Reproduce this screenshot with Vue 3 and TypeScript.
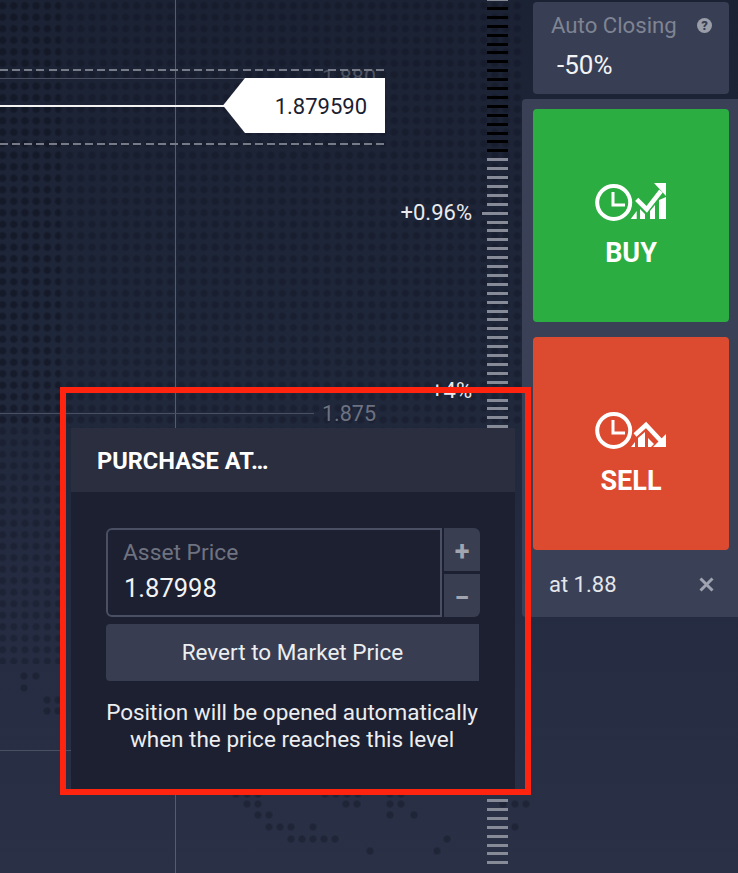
<script setup lang="ts">
// ruler ticks down the right edge of the chart
const ticks = Array.from({ length: 98 }, (_, i) => ({
  top: i * 8.9 - 2,
  dark: i > 0 && i < 18,
  major: i >= 24 && i % 20 === 4,
}))

// sparse dots of the world map around the dialog
const mapDots: [number, number][] = [
  [236, 794], [247, 794], [258, 794], [325, 794], [336, 794], [347, 794], [358, 794], [390, 794], [401, 794],
  [247, 804], [258, 804], [346, 804], [357, 804], [390, 804], [401, 804], [503, 804], [515, 804], [526, 804],
  [258, 815], [269, 815], [390, 815], [414, 815],
  [269, 827], [280, 827], [291, 827], [313, 827], [515, 827],
  [291, 839], [302, 839], [313, 839], [324, 839], [335, 839], [447, 839],
  [370, 851], [437, 851],
  [47, 700], [58, 700], [47, 711], [58, 711],
  [24, 676], [36, 676], [24, 688],
]
</script>

<template>
  <div class="page">
    <div class="chart">
      <div class="dots dots-top"></div>
      <div class="dots dots-left"></div>
      <div v-for="([x, y], i) in mapDots" :key="i" class="map-dot" :style="{ left: x + 'px', top: y + 'px' }"></div>

      <div class="grid-v"></div>
      <div class="grid-h grid-1880"></div>
      <div class="grid-h grid-1875"></div>
      <div class="grid-h grid-low"></div>
      <span class="axis axis-1880">1.880</span>
      <span class="axis axis-1875">1.875</span>

      <div class="dash dash-top"></div>
      <div class="dash dash-bottom"></div>
      <div class="price-line"></div>
      <div class="price-tag">1.879590</div>

      <span class="pct pct-1">+0.96%</span>
      <span class="pct pct-2">+4%</span>

      <div class="ruler">
        <i
          v-for="(t, i) in ticks"
          :key="i"
          :class="{ dark: t.dark, major: t.major }"
          :style="{ top: t.top + 'px' }"
        ></i>
      </div>

      <section class="dialog">
        <header class="dialog-head">PURCHASE AT…</header>
        <div class="dialog-body">
          <div class="price-row">
            <div class="price-input">
              <span class="price-label">Asset Price</span>
              <span class="price-value">1.87998</span>
            </div>
            <div class="steppers">
              <button class="step step-plus">+</button>
              <button class="step step-minus">−</button>
            </div>
          </div>
          <button class="revert">Revert to Market Price</button>
          <p class="hint">Position will be opened automatically<br />when the price reaches this level</p>
        </div>
      </section>
    </div>

    <aside class="side">
      <div class="auto-card">
        <div class="auto-top">
          <span class="auto-label">Auto Closing</span>
          <span class="help">?</span>
        </div>
        <div class="auto-value">-50%</div>
      </div>

      <div class="trade-panel">
        <button class="trade buy">
          <svg class="trade-icon" width="72" height="38" viewBox="0 0 72 38">
            <circle cx="18.7" cy="19.5" r="16.5" fill="none" stroke="#fff" stroke-width="4" />
            <path d="M18 9v13h12" fill="none" stroke="#fff" stroke-width="3" />
            <path d="M41.7 16.3l10 10L66 8" fill="none" stroke="#fff" stroke-width="4.5" />
            <path d="M59 0h12v13z" fill="#fff" />
            <path d="M35.7 36l6-8v8zM45 36V26l5 5v5zM55 36v-8l5-6v14zM64 36V17l7-3v22z" fill="#fff" />
          </svg>
          <span>BUY</span>
        </button>
        <button class="trade sell">
          <svg class="trade-icon" width="72" height="38" viewBox="0 0 72 38">
            <circle cx="18.7" cy="19.5" r="16.5" fill="none" stroke="#fff" stroke-width="4" />
            <path d="M18 9v13h12" fill="none" stroke="#fff" stroke-width="3" />
            <path d="M40 24l11-10 16 17" fill="none" stroke="#fff" stroke-width="4.5" />
            <path d="M71 23v13H58z" fill="#fff" />
            <path d="M36 36l4-5v5zM43 36v-9l7-6v15zM53 36v-9l6 6-3 3z" fill="#fff" />
          </svg>
          <span>SELL</span>
        </button>
        <div class="at-row">
          <span>at 1.88</span>
          <svg width="15" height="15" viewBox="0 0 15 15">
            <path d="M1.5 1.5l12 12M13.5 1.5l-12 12" stroke="#a0a4b1" stroke-width="3" fill="none" />
          </svg>
        </div>
      </div>
    </aside>

    <div class="highlight"></div>
  </div>
</template>

<style>
body {
  background: #232a3f;
}
</style>

<style scoped>
.page {
  position: relative;
  display: flex;
  width: 738px;
  height: 873px;
  overflow: hidden;
  font-family: Roboto, "Liberation Sans", sans-serif;
  background: linear-gradient(180deg, #1b2234 0%, #1e2639 35%, #262d43 75%, #2a3147 100%);
  color: #fff;
}

.chart {
  position: relative;
  width: 522px;
  flex: none;
}

.dots {
  position: absolute;
  left: 0;
  top: 0;
  background-image: radial-gradient(circle at 50% 50%, rgba(12, 15, 26, 0.3) 2.6px, rgba(12, 15, 26, 0) 4.6px);
  background-size: 11.2px 11.5px;
  background-position: -3px 0;
}

.dots-top {
  width: 522px;
  height: 428px;
}

.dots-left {
  width: 60px;
  height: 664px;
}

.map-dot {
  position: absolute;
  width: 10px;
  height: 10px;
  margin: -5px 0 0 -5px;
  border-radius: 50%;
  background: radial-gradient(circle, rgba(12, 15, 26, 0.34) 2.6px, rgba(12, 15, 26, 0) 4.6px);
}

.grid-v {
  position: absolute;
  left: 175px;
  top: 0;
  bottom: 0;
  width: 1px;
  background: #565c6c;
}

.grid-h {
  position: absolute;
  left: 0;
  height: 1px;
  background: #4a5061;
}

.grid-1880 {
  top: 78px;
  width: 315px;
}

.grid-1875 {
  top: 413px;
  width: 314px;
}

.grid-low {
  top: 750px;
  width: 72px;
}

.axis {
  position: absolute;
  left: 322px;
  font-size: 21.5px;
  line-height: 24px;
  color: #6d7281;
}

.axis-1880 {
  top: 66px;
  color: #4d5363;
}

.axis-1875 {
  top: 402px;
}

.dash {
  position: absolute;
  left: 0;
  width: 384px;
  height: 2px;
  background: repeating-linear-gradient(90deg, #777b88 0 8px, transparent 8px 12.13px);
}

.dash-top {
  top: 69px;
}

.dash-bottom {
  top: 143px;
}

.price-line {
  position: absolute;
  left: 0;
  top: 105px;
  width: 226px;
  height: 2px;
  background: #f4f4f4;
}

.price-tag {
  position: absolute;
  left: 223px;
  top: 78px;
  width: 162px;
  height: 55px;
  padding-right: 18px;
  box-sizing: border-box;
  background: #fff;
  clip-path: polygon(22px 0, 100% 0, 100% 100%, 22px 100%, 0 50%);
  color: #1b2030;
  font-size: 22px;
  line-height: 57px;
  text-align: right;
}

.pct {
  position: absolute;
  right: 50px;
  font-size: 22px;
  line-height: 24px;
  color: #e9eaee;
}

.pct-1 {
  top: 201px;
}

.pct-2 {
  top: 379px;
}

.ruler {
  position: absolute;
  left: 487px;
  top: 0;
  bottom: 0;
  width: 21px;
}

.ruler i {
  position: absolute;
  left: 0;
  width: 21px;
  height: 3px;
  background: #878b97;
}

.ruler i.dark {
  background: #000;
}

.ruler i.major {
  left: -5px;
  width: 26px;
}

.dialog {
  position: absolute;
  left: 71px;
  top: 428px;
  width: 444px;
  height: 362px;
  background: #1d2031;
}

.dialog-head {
  height: 64px;
  padding-left: 26px;
  background: #2a2e3f;
  font-size: 23.6px;
  font-weight: 700;
  line-height: 66px;
}

.dialog-body {
  padding: 36px 35px 0;
}

.price-row {
  display: flex;
  gap: 2px;
  height: 89px;
}

.price-input {
  display: flex;
  flex-direction: column;
  flex: 1;
  padding: 10px 15px 0;
  border: 2px solid #4a4f63;
  border-radius: 6px 0 0 6px;
}

.price-label {
  font-size: 22.8px;
  line-height: 25px;
  color: #6f7380;
}

.price-value {
  margin-top: 8px;
  padding-left: 1px;
  font-size: 25.5px;
  line-height: 30px;
  color: #f2f3f5;
}

.steppers {
  display: flex;
  flex-direction: column;
  gap: 3px;
  width: 36px;
}

.step {
  flex: 1;
  padding: 5px 0 0;
  border: 0;
  background: #393e51;
  color: #a2a5b0;
  font-family: inherit;
  font-size: 27px;
  font-weight: 700;
  line-height: 1;
}

.step-plus {
  border-radius: 0 6px 0 0;
}

.step-minus {
  border-radius: 0 0 6px 0;
}

.revert {
  display: block;
  width: 373px;
  height: 57px;
  margin-top: 7px;
  padding: 0 0 2px;
  border: 0;
  border-radius: 4px 0 0 4px;
  background: #383d52;
  color: #eceef0;
  font-family: inherit;
  font-size: 22.5px;
}

.hint {
  margin: 18px -4px 0 -6px;
  font-size: 22.5px;
  line-height: 27px;
  text-align: center;
  color: #eceef0;
}

.side {
  display: flex;
  flex-direction: column;
  flex: 1;
  padding-top: 2px;
}

.auto-card {
  box-sizing: border-box;
  width: 196px;
  height: 92px;
  margin-left: 11px;
  padding: 9px 17px 0 18px;
  border-radius: 4px;
  background: #383e54;
}

.auto-top {
  display: flex;
  align-items: center;
  justify-content: space-between;
}

.auto-label {
  font-size: 22.2px;
  line-height: 28px;
  color: #7f8492;
}

.help {
  width: 15px;
  height: 15px;
  border-radius: 50%;
  background: #9a9ea9;
  color: #383e54;
  font-size: 13px;
  font-weight: 900;
  line-height: 15px;
  text-align: center;
}

.auto-value {
  margin-top: 11px;
  padding-left: 6px;
  font-size: 26px;
  line-height: 30px;
  color: #f2f3f5;
}

.trade-panel {
  display: flex;
  flex-direction: column;
  gap: 15px;
  height: 518px;
  margin-top: 5px;
  padding: 10px 9px 0 11px;
  box-sizing: border-box;
  border-radius: 4px 0 0 4px;
  background: #3a4056;
}

.trade {
  display: flex;
  flex-direction: column;
  align-items: center;
  justify-content: flex-start;
  flex: none;
  width: 196px;
  height: 213px;
  padding: 74px 0 0;
  border: 0;
  border-radius: 4px;
  color: #fff;
  font-family: inherit;
  font-size: 27px;
  font-weight: 700;
  line-height: 30px;
}

.trade span {
  margin-top: 17px;
}

.buy {
  background: #2cad42;
}

.sell {
  background: #dc4b2f;
}

.trade-icon {
  display: block;
}

.at-row {
  display: flex;
  align-items: center;
  justify-content: space-between;
  margin-top: -2px;
  padding: 0 15px 0 16px;
  height: 42px;
  font-size: 22px;
  color: #e4e6ea;
}

.highlight {
  position: absolute;
  left: 60px;
  top: 387px;
  width: 471px;
  height: 408px;
  box-sizing: border-box;
  border: 6px solid #ff2410;
  pointer-events: none;
}
</style>
